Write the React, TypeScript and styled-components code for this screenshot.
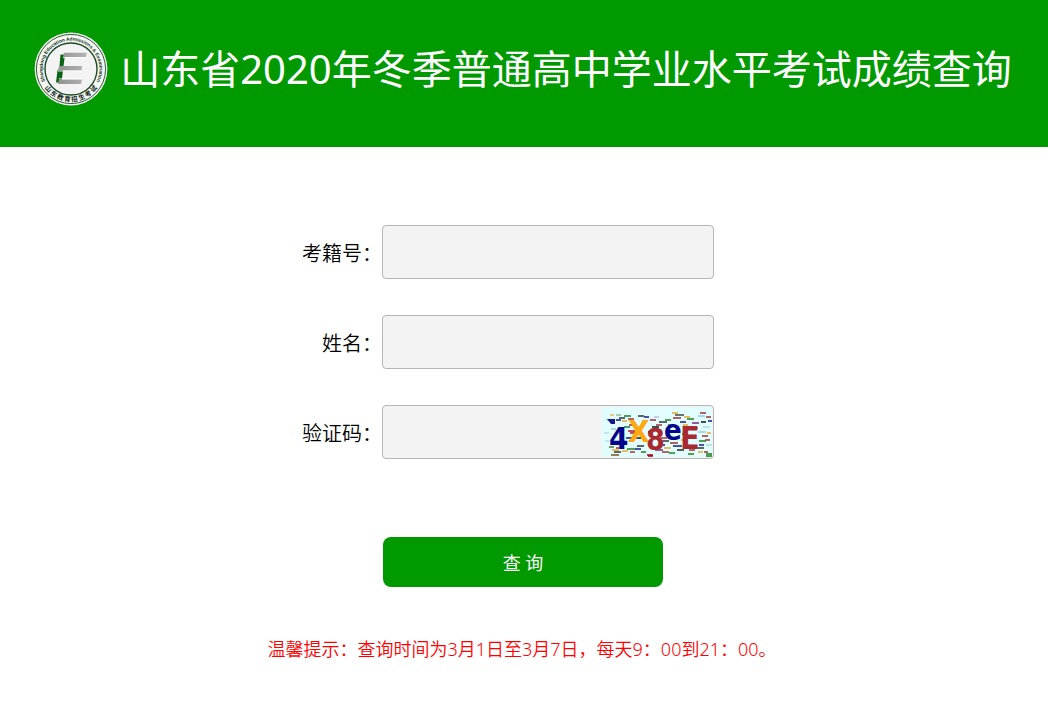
import React from 'react';
import styled, { createGlobalStyle } from 'styled-components';

const GlobalStyle = createGlobalStyle`
  * { box-sizing: border-box; }
  body {
    margin: 0;
    background: #fff;
    color: #000;
    font-family: "Noto Sans", "Noto Sans CJK SC", sans-serif;
  }
`;

const Header = styled.header`
  display: flex;
  align-items: center;
  justify-content: center;
  gap: 12px;
  padding: 31px 16px 41px 14px;
  background: #090;
  color: #fff;
`;

const LogoImage = styled.svg`
  flex: none;
  width: 74px;
  height: 74px;
`;

const Title = styled.h1`
  margin: 0;
  font-size: 40px;
  line-height: 75px;
  font-weight: 400;
`;

const Main = styled.main`
  display: flex;
  flex-direction: column;
  align-items: center;
  padding: 78px 16px 40px;
`;

const Form = styled.form`
  display: flex;
  flex-direction: column;
  gap: 36px;
  width: 100%;
  max-width: 444px;
  padding-right: 32px;
`;

const Row = styled.div`
  display: grid;
  grid-template-columns: 80px minmax(0, 1fr);
  align-items: center;
`;

const Label = styled.label`
  padding-top: 4px;
  font-size: 20px;
  line-height: 28px;
  font-weight: 350;
  text-align: right;
  white-space: nowrap;
`;

const Field = styled.div`
  display: flex;
  align-items: center;
  height: 54px;
  padding: 1px;
  border: 1px solid #b6b6b6;
  border-radius: 4px;
  background: #f3f3f3;
`;

const TextInput = styled.input`
  flex: 1;
  width: 100%;
  min-width: 0;
  height: 100%;
  padding: 0 12px;
  border: 0;
  outline: 0;
  background: transparent;
  font: inherit;
  font-size: 20px;
`;

const CaptchaImage = styled.svg`
  flex: none;
  width: 110px;
  height: 50px;
  overflow: visible;
`;

const SubmitButton = styled.button`
  width: 280px;
  height: 50px;
  margin: 42px 0 0 81px;
  border: 0;
  border-radius: 8px;
  background: #090;
  color: #fff;
  font: inherit;
  font-size: 18px;
  cursor: pointer;
`;

const Notice = styled.p`
  margin: 48px 0 0;
  padding-right: 4px;
  color: #f00;
  font-size: 18px;
  line-height: 28px;
  font-weight: 350;
`;

function Logo() {
  return (
    <LogoImage viewBox="0 0 74 74" role="img" aria-label="山东教育招生考试">
      <defs>
        <path id="ringTop" d="M 12.4 51.2 A 28.4 28.4 0 1 1 61.6 51.2" />
        <path id="ringBottom" d="M 4.8 42 A 32.6 32.6 0 0 0 69.2 42" />
        <linearGradient id="bar" x1="0" x2="1">
          <stop offset="0" stopColor="#929292" />
          <stop offset="1" stopColor="#b4b4b4" />
        </linearGradient>
      </defs>
      <circle cx="37" cy="37" r="36.4" fill="#f4f7f4" />
      <circle cx="37" cy="37" r="34.6" fill="none" stroke="#34543a" strokeWidth="1" />
      <circle cx="37" cy="37" r="26" fill="#f3f3f3" stroke="#1d4a24" strokeWidth="1.4" />
      <text fill="#14361a" fontFamily="Liberation Sans, sans-serif" fontSize="4.8" fontWeight="700">
        <textPath href="#ringTop" startOffset="50%" textAnchor="middle">
          Shangdong Education Admissions &amp; Examination
        </textPath>
      </text>
      <text fill="#101a12" fontFamily="Noto Sans CJK SC, sans-serif" fontSize="6.4" fontWeight="700">
        <textPath href="#ringBottom" startOffset="50%" textAnchor="middle">
          山 东 教 育 招 生 考 试
        </textPath>
      </text>
      <path d="M26.5 22.5 H31 L29.5 34 H25.5 Z M23.5 38 H29 L27.5 50.5 H22 Z" fill="#0a6416" />
      <path d="M30 20.7 H52.8 L52 25 H29 Z M25 34 H48.2 L47.4 38.4 H24 Z M25 47.6 H48 L47 52 H24 Z" fill="url(#bar)" />
      <path d="M29 25.6 H52 M24 39 H47.4 M25 46.8 H48" stroke="#fff" strokeWidth="0.8" />
    </LogoImage>
  );
}

// x, y, length, colour of each noise stroke
const noise: [number, number, number, string][] = [
  [8, 8, 4, '#e9b95c'], [14, 8, 5, '#8fbf8f'], [22, 9, 7, '#208020'], [17, 11, 6, '#333'],
  [26, 12, 6, '#a03030'], [14, 13, 5, '#17178a'], [20, 14, 5, '#e9a52c'], [36, 9, 6, '#333'],
  [42, 10, 5, '#17178a'], [48, 13, 6, '#a03030'], [40, 14, 4, '#86b8d8'], [52, 10, 5, '#bbd'],
  [70, 6, 6, '#e9a52c'], [73, 8, 9, '#444'], [71, 11, 8, '#a03030'], [82, 10, 6, '#e9a52c'],
  [85, 12, 7, '#208020'], [98, 6, 6, '#a03030'], [96, 9, 7, '#96c7e8'], [104, 10, 5, '#a03030'],
  [99, 15, 5, '#111'], [106, 14, 4, '#17178a'], [90, 16, 7, '#7b237b'], [57, 15, 8, '#333'],
  [63, 13, 6, '#208020'], [78, 15, 6, '#17178a'], [81, 18, 5, '#e9a52c'], [54, 18, 6, '#a03030'],
  [50, 20, 7, '#111'], [27, 18, 5, '#a03030'], [22, 20, 6, '#207050'], [26, 24, 7, '#b01828'],
  [28, 26, 5, '#b01828'], [24, 31, 6, '#17178a'], [27, 34, 5, '#a03030'], [9, 22, 5, '#93d0d0'],
  [2, 26, 5, '#b8dcec'], [3, 34, 4, '#b8dcec'], [4, 13, 4, '#c6e7c6'], [46, 25, 4, '#111'],
  [58, 31, 7, '#b03030'], [59, 34, 8, '#333'], [57, 38, 6, '#17178a'], [62, 41, 7, '#e9a52c'],
  [68, 36, 8, '#a03030'], [71, 39, 9, '#17178a'], [75, 43, 7, '#222'], [79, 33, 6, '#e9a52c'],
  [80, 27, 5, '#20a020'], [96, 25, 8, '#97cfd6'], [100, 29, 6, '#a03030'], [105, 26, 4, '#e9a52c'],
  [97, 34, 7, '#208020'], [103, 33, 5, '#a03030'], [97, 38, 5, '#17178a'], [104, 38, 6, '#b0d8d8'],
  [94, 41, 8, '#333'], [87, 43, 6, '#a03030'], [86, 47, 6, '#208020'], [96, 45, 5, '#e9a52c'],
  [102, 45, 4, '#a03030'], [104, 47, 6, '#108010'], [104, 49, 6, '#108010'], [7, 40, 5, '#4a7a30'],
  [10, 43, 7, '#e9a52c'], [14, 41, 6, '#a03030'], [12, 45, 7, '#333'], [9, 48, 8, '#7a5520'],
  [20, 44, 6, '#e9a52c'], [25, 42, 8, '#208020'], [28, 45, 5, '#a03030'], [33, 42, 6, '#17178a'],
  [35, 39, 7, '#333'], [39, 45, 5, '#208020'], [45, 48, 6, '#a00018'], [46, 49, 5, '#a00018'],
  [53, 43, 8, '#7b237b'], [60, 45, 7, '#a03030'], [67, 46, 6, '#208020'], [66, 18, 5, '#208020'],
  [90, 21, 6, '#208020'], [101, 20, 7, '#b5d7ea'], [20, 36, 5, '#86b8d8'], [34, 31, 5, '#111'],
];

function Captcha() {
  return (
    <CaptchaImage viewBox="0 0 110 50" role="img" aria-label="4X8eE">
      <rect width="110" height="50" fill="#e2fdfd" />
      {noise.map(([x, y, length, colour]) => (
        <path key={`${x}-${y}`} d={`M${x} ${y}h${length}`} stroke={colour} strokeWidth="1.5" />
      ))}
      <path d="M5 12 h8 v5 h-4 z" fill="#17178a" />
      <g fontFamily="DejaVu Sans Condensed, DejaVu Sans, sans-serif" fontWeight="700">
        <text x="7" y="42" fontSize="31" fill="#05058a">4</text>
        <text x="26" y="35" fontSize="31" fill="#ffa811">X</text>
        <text x="44" y="43" fontSize="30" fill="#a82a30">8</text>
        <text x="62" y="33" fontSize="29" fill="#05058a">e</text>
        <text x="78" y="42" fontSize="32" fill="#a82a30">E</text>
      </g>
    </CaptchaImage>
  );
}

export default function App() {
  return (
    <>
      <GlobalStyle />
      <Header>
        <Logo />
        <Title>山东省2020年冬季普通高中学业水平考试成绩查询</Title>
      </Header>
      <Main>
        <Form onSubmit={(event) => event.preventDefault()}>
          <Row>
            <Label htmlFor="studentNo">考籍号：</Label>
            <Field>
              <TextInput id="studentNo" type="text" />
            </Field>
          </Row>
          <Row>
            <Label htmlFor="fullName">姓名：</Label>
            <Field>
              <TextInput id="fullName" type="text" />
            </Field>
          </Row>
          <Row>
            <Label htmlFor="captcha">验证码：</Label>
            <Field>
              <TextInput id="captcha" type="text" autoComplete="off" />
              <Captcha />
            </Field>
          </Row>
          <SubmitButton type="submit">查 询</SubmitButton>
        </Form>
        <Notice>温馨提示：查询时间为3月1日至3月7日，每天9：00到21：00。</Notice>
      </Main>
    </>
  );
}
